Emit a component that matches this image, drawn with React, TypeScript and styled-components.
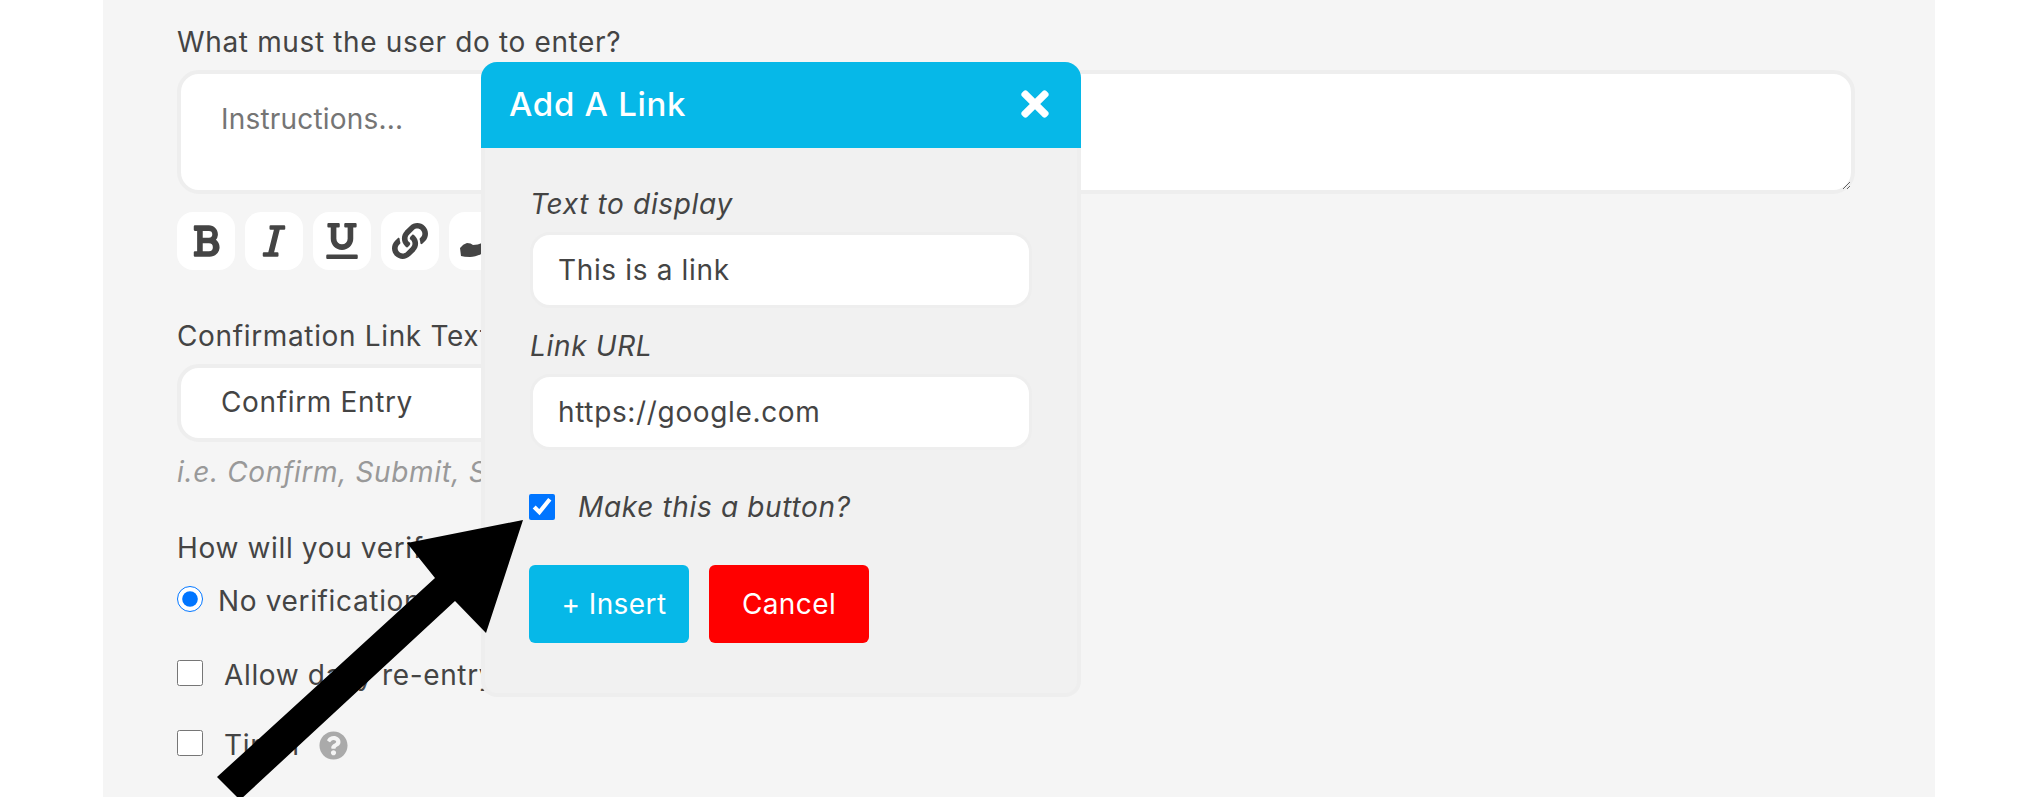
import React from "react";
import styled, { createGlobalStyle } from "styled-components";
import {
  FaBold,
  FaItalic,
  FaUnderline,
  FaLink,
  FaTimes,
  FaQuestionCircle,
} from "react-icons/fa";

const GlobalStyle = createGlobalStyle`
  html, body {
    margin: 0;
    background: #fff;
    overflow: hidden;
  }
  * {
    box-sizing: border-box;
  }
`;

const fontStack = `Inter, "Noto Sans", sans-serif`;

const Page = styled.div`
  position: relative;
  height: 797px;
  overflow: hidden;
  font-family: ${fontStack};
  font-size: 28px;
  letter-spacing: 0.65px;
  color: #444;
`;

const Panel = styled.div`
  margin: 0 97px 0 103px;
  height: 100%;
  padding: 24px 80px 0 74px;
  background: #f5f5f5;
`;

const Label = styled.div<{ $top: number }>`
  margin-top: ${(p) => p.$top}px;
  line-height: 36px;
`;

const TextArea = styled.textarea`
  display: block;
  width: 100%;
  height: 124px;
  margin-top: 10px;
  padding: 27px 40px;
  border: 4px solid #eee;
  border-radius: 22px;
  outline: none;
  background: #fff;
  font-family: ${fontStack};
  font-size: 28px;
  letter-spacing: 0.65px;
  line-height: 36px;
  color: #444;

  &::placeholder {
    letter-spacing: 0.2px;
  }
`;

const Toolbar = styled.div`
  display: flex;
  gap: 10px;
  margin-top: 18px;
`;

const ToolButton = styled.div`
  display: flex;
  align-items: center;
  justify-content: center;
  width: 58px;
  height: 58px;
  border-radius: 16px;
  background: #fff;
  color: #444;
  font-size: 36px;
`;

const TextInput = styled.input<{ $width: number }>`
  display: block;
  width: ${(p) => p.$width}px;
  height: 78px;
  margin-top: 10px;
  padding: 0 40px 3px;
  border: 4px solid #eee;
  border-radius: 22px;
  outline: none;
  background: #fff;
  font-family: ${fontStack};
  font-size: 28px;
  letter-spacing: 0.65px;
  color: #444;
`;

const Hint = styled.div`
  margin-top: 12px;
  line-height: 36px;
  font-style: italic;
  color: #999;
`;

const OptionRow = styled.label<{ $top: number; $gap: number }>`
  display: flex;
  align-items: center;
  gap: ${(p) => p.$gap}px;
  height: 36px;
  margin-top: ${(p) => p.$top}px;
`;

const OptionText = styled.span`
  display: inline-flex;
  align-items: center;
  padding-top: 4px;
`;

const Tick = styled.input`
  flex: none;
  width: 26px;
  height: 26px;
  margin: 0;
`;

const Help = styled.span`
  display: inline-flex;
  margin-left: 15px;
  color: #aaa;
  font-size: 29px;
`;

const Modal = styled.div`
  position: absolute;
  left: 481px;
  top: 62px;
  width: 600px;
  height: 635px;
  border: 4px solid #eee;
  border-top: 0;
  border-radius: 16px;
  background: #f1f1f1;
`;

const ModalHeader = styled.div`
  display: flex;
  align-items: center;
  justify-content: space-between;
  height: 86px;
  margin: 0 -4px;
  padding: 0 26px 2px 28px;
  border-radius: 16px 16px 0 0;
  background: #06b8e8;
  color: #fff;
  font-size: 33px;
  font-weight: 500;
  letter-spacing: 0.7px;
`;

const CloseIcon = styled.span`
  display: inline-flex;
  font-size: 40px;
`;

const ModalBody = styled.div`
  padding: 38px 45px 0 45px;
`;

const ModalLabel = styled.div<{ $top: number }>`
  margin-top: ${(p) => p.$top}px;
  line-height: 36px;
  font-style: italic;
`;

const ModalInput = styled.input`
  display: block;
  width: 502px;
  height: 76px;
  margin-top: 10px;
  padding: 0 25px;
  border: 3px solid #eee;
  border-radius: 20px;
  outline: none;
  background: #fff;
  font-family: ${fontStack};
  font-size: 28px;
  letter-spacing: 0.65px;
  color: #444;
`;

const CheckRow = styled.label`
  display: flex;
  align-items: center;
  gap: 23px;
  height: 36px;
  margin: 39px 0 0 -1px;
  font-style: italic;
`;

const Actions = styled.div`
  display: flex;
  gap: 20px;
  margin: 40px 0 0 -1px;
`;

const ActionButton = styled.button<{ $bg: string; $indent?: number }>`
  width: 160px;
  height: 78px;
  padding: 0 0 0 ${(p) => p.$indent ?? 0}px;
  border: 0;
  border-radius: 6px;
  background: ${(p) => p.$bg};
  color: #fff;
  font-family: ${fontStack};
  font-size: 28px;
  letter-spacing: 0.4px;
`;

const Arrow = styled.svg`
  position: absolute;
  left: 0;
  top: 0;
  width: 2032px;
  height: 797px;
  pointer-events: none;
`;

// only the lower left of this icon shows from under the modal
const BrushMark = () => (
  <svg width="36" height="36" viewBox="0 0 36 36" fill="currentColor">
    <path d="M0 25 Q3 21 7 20 Q11 20 13 22 Q18 22 22 20 L30 14 L30 26 Q18 34 10 34 Q4 34 1 33 Z" />
  </svg>
);

const App = () => {
  return (
    <Page>
      <GlobalStyle />
      <Panel>
        <Label $top={0}>What must the user do to enter?</Label>
        <TextArea placeholder="Instructions..." />
        <Toolbar>
          <ToolButton><FaBold /></ToolButton>
          <ToolButton><FaItalic /></ToolButton>
          <ToolButton><FaUnderline /></ToolButton>
          <ToolButton><FaLink /></ToolButton>
          <ToolButton><BrushMark /></ToolButton>
        </Toolbar>

        <Label $top={48}>Confirmation Link Text</Label>
        <TextInput $width={600} defaultValue="Confirm Entry" />
        <Hint>i.e. Confirm, Submit, Subscribe</Hint>

        <Label $top={40}>How will you verify entries?</Label>
        <OptionRow $top={15} $gap={15}>
          <Tick type="radio" name="verify" defaultChecked />
          <OptionText>No verification</OptionText>
        </OptionRow>
        <OptionRow $top={38} $gap={21}>
          <Tick type="checkbox" />
          <OptionText>Allow daily re-entry</OptionText>
        </OptionRow>
        <OptionRow $top={34} $gap={21}>
          <Tick type="checkbox" />
          <OptionText>
            Timer
            <Help><FaQuestionCircle /></Help>
          </OptionText>
        </OptionRow>
      </Panel>

      <Modal>
        <ModalHeader>
          Add A Link
          <CloseIcon><FaTimes /></CloseIcon>
        </ModalHeader>
        <ModalBody>
          <ModalLabel $top={0}>Text to display</ModalLabel>
          <ModalInput defaultValue="This is a link" />
          <ModalLabel $top={20}>Link URL</ModalLabel>
          <ModalInput defaultValue="https://google.com" />
          <CheckRow>
            <Tick type="checkbox" defaultChecked />
            Make this a button?
          </CheckRow>
          <Actions>
            <ActionButton $bg="#06b8e8" $indent={10}>+ Insert</ActionButton>
            <ActionButton $bg="#ff0000">Cancel</ActionButton>
          </Actions>
        </ModalBody>
      </Modal>

      <Arrow viewBox="0 0 2032 797">
        <polygon points="523,520 407,543 435,578 217,777 240,800 455,601 486,633" fill="#000" />
      </Arrow>
    </Page>
  );
};

export default App;
